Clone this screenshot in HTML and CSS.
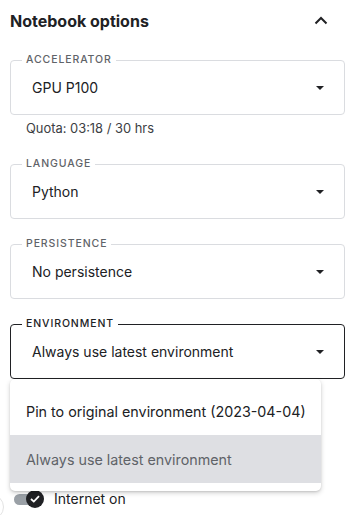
FILE: index.html
```html
<!DOCTYPE html>
<html lang="en">
<head>
<meta charset="utf-8">
<link rel="stylesheet" href="styles.css">
</head>
<body>
<div class="panel">
  <div class="header">
    <h2 class="title">Notebook options</h2>
    <svg class="chevron" width="14" height="9" viewBox="0 0 14 9"><path d="M1.5 7.5 L7 2 L12.5 7.5" fill="none" stroke="#202124" stroke-width="2"/></svg>
  </div>

  <fieldset class="field field-first">
    <legend class="label">Accelerator</legend>
    <div class="row"><span class="value">GPU P100</span><svg class="caret" width="8" height="4" viewBox="0 0 8 4"><path d="M0 0 L8 0 L4 4 Z" fill="#202124"/></svg></div>
  </fieldset>
  <div class="quota">Quota: 03:18 / 30 hrs</div>

  <fieldset class="field field-lang">
    <legend class="label">Language</legend>
    <div class="row"><span class="value">Python</span><svg class="caret" width="8" height="4" viewBox="0 0 8 4"><path d="M0 0 L8 0 L4 4 Z" fill="#202124"/></svg></div>
  </fieldset>

  <fieldset class="field">
    <legend class="label">Persistence</legend>
    <div class="row"><span class="value">No persistence</span><svg class="caret" width="8" height="4" viewBox="0 0 8 4"><path d="M0 0 L8 0 L4 4 Z" fill="#202124"/></svg></div>
  </fieldset>

  <div class="env-wrap">
    <fieldset class="field field-active">
      <legend class="label">Environment</legend>
      <div class="row"><span class="value">Always use latest environment</span><svg class="caret" width="8" height="4" viewBox="0 0 8 4"><path d="M0 0 L8 0 L4 4 Z" fill="#202124"/></svg></div>
    </fieldset>
    <ul class="menu">
      <li class="item">Pin to original environment (2023-04-04)</li>
      <li class="item item-selected">Always use latest environment</li>
    </ul>
  </div>

  <div class="toggle-row">
    <span class="switch"><span class="track"></span><span class="thumb"><svg width="10" height="8" viewBox="0 0 10 8"><path d="M1 4 L3.8 6.6 L9 1.2" fill="none" stroke="#fff" stroke-width="1.8"/></svg></span></span>
    <span class="toggle-label">Internet on</span>
  </div>
</div>
<span class="ghost-circle"></span>
</body>
</html>
```

FILE: styles.css
```css
* { box-sizing: border-box; }
html, body {
  margin: 0;
  padding: 0;
  background: #fff;
  overflow: hidden;
}
body {
  font-family: Inter, "Liberation Sans", sans-serif;
  color: #202124;
  width: 355px;
  height: 515px;
  position: relative;
}
.panel {
  padding: 0 10px 0 10px;
}
.header {
  display: flex;
  align-items: center;
  justify-content: space-between;
  height: 42px;
  padding-right: 17px;
}
.title {
  margin: 0;
  font-size: 16px;
  font-weight: 700;
  line-height: 22px;
}
.chevron { display: block; margin-top: -1px; }

.field {
  margin: 0;
  padding: 0;
  border: 1px solid #dadce0;
  border-radius: 4px;
  min-width: 0;
}
.field-first { margin-top: 12px; }
.field-lang { margin-top: 21px; }
.field + .field { margin-top: 19px; }
.env-wrap { position: relative; margin-top: 19px; }
.field-active { border-color: #202124; }
.field-active .label { color: #202124; }

.label {
  margin-left: 11px;
  padding: 0 4px;
  font-size: 10.5px;
  line-height: 12px;
  font-weight: 500;
  letter-spacing: 0.9px;
  text-transform: uppercase;
  color: #5f6368;
}
.row {
  display: flex;
  align-items: center;
  justify-content: space-between;
  height: 44px;
  margin-bottom: 4px;
  padding: 0 20px 0 21px;
}
.value {
  font-size: 14px;
  line-height: 20px;
  color: #202124;
  white-space: nowrap;
}
.caret { display: block; }

.quota {
  margin-top: 6px;
  padding-left: 16px;
  font-size: 12.9px;
  line-height: 16px;
  color: #3c4043;
}

.menu {
  position: absolute;
  left: 0;
  top: 61px;
  width: 311px;
  margin: 0;
  padding: 8px 0;
  list-style: none;
  background: #fff;
  border-radius: 5px;
  box-shadow: 0 2px 5px rgba(0,0,0,0.18), 0 1px 2px rgba(0,0,0,0.1);
  z-index: 2;
}
.item {
  height: 48px;
  display: flex;
  align-items: center;
  padding: 0 16px;
  font-size: 14.3px;
  color: #202124;
  white-space: nowrap;
}
.item-selected {
  background: #dedfe3;
  color: #5f6368;
}

.toggle-row {
  display: flex;
  align-items: center;
  margin-top: 110px;
  padding-left: 4px;
  height: 20px;
}
.switch {
  position: relative;
  width: 34px;
  height: 18px;
  display: block;
}
.track {
  position: absolute;
  left: 0;
  top: 4px;
  width: 26px;
  height: 11px;
  border-radius: 6px;
  background: #9aa0a6;
}
.thumb {
  position: absolute;
  left: 12px;
  top: 0;
  width: 18px;
  height: 18px;
  border-radius: 50%;
  background: #202124;
  display: flex;
  align-items: center;
  justify-content: center;
}
.thumb svg { display: block; }
.toggle-label {
  margin-left: 6px;
  font-size: 14px;
  line-height: 20px;
  color: #202124;
}
.ghost-circle {
  position: absolute;
  left: -22px;
  top: 494px;
  width: 26px;
  height: 26px;
  border-radius: 50%;
  border: 1px solid #e3e3e3;
}
```
